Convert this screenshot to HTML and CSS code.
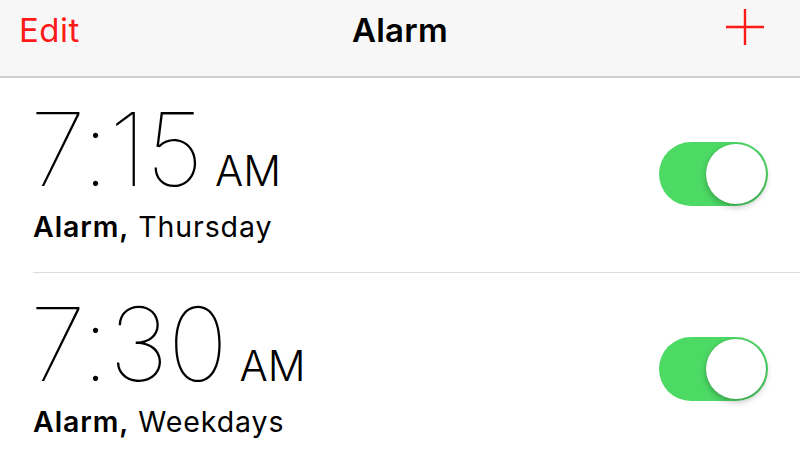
FILE: index.html
```html
<!DOCTYPE html>
<html>
<head>
<meta charset="utf-8">
<link rel="stylesheet" href="styles.css">
</head>
<body>
<div class="app">
  <header class="nav">
    <span class="nav-edit">Edit</span>
    <span class="nav-title">Alarm</span>
    <svg class="nav-add" width="46" height="40" viewBox="0 0 46 40"><path d="M23 2V38M4 20H42" stroke="#ff1a1a" stroke-width="2.4" fill="none"/></svg>
  </header>
  <div class="list">
    <div class="row">
      <div class="info">
        <div class="time"><span class="digits">7:15</span><span class="ampm">AM</span></div>
        <div class="label"><b>Alarm,</b> Thursday</div>
      </div>
      <div class="toggle"><div class="knob"></div></div>
    </div>
    <div class="row">
      <div class="info">
        <div class="time"><span class="digits">7:30</span><span class="ampm">AM</span></div>
        <div class="label"><b>Alarm,</b> Weekdays</div>
      </div>
      <div class="toggle"><div class="knob"></div></div>
    </div>
  </div>
</div>
</body>
</html>
```
FILE: styles.css
```css
html, body { margin: 0; padding: 0; background: #fff; }
.app { width: 800px; height: 450px; overflow: hidden; font-family: Inter, Roboto, "Liberation Sans", sans-serif; }
.nav {
  height: 76px; background: #f7f7f7; border-bottom: 2px solid #cfcfd2;
  display: flex; align-items: flex-start; justify-content: space-between;
  padding: 0 32px 0 19px; position: relative; box-sizing: content-box;
}
.nav-edit { color: #ff1a1a; font-size: 33px; line-height: 1; margin-top: 14px; font-weight: 400; letter-spacing: 0.5px; }
.nav-title { position: absolute; left: 0; right: 0; top: 14px; text-align: center; font-size: 33px; line-height: 1; font-weight: 600; color: #000; letter-spacing: 0.3px; }
.nav-add { margin-top: 7px; }
.list { padding-left: 33px; }
.row {
  height: 194px; display: flex; align-items: center; justify-content: space-between;
  border-bottom: 1px solid #dcdcdc; padding-right: 32px;
}
.info { display: flex; flex-direction: column; margin-top: -11px; }
.time { display: flex; align-items: baseline; line-height: 1; }
.digits { font-size: 102px; font-weight: 100; color: #000; letter-spacing: -0.5px; margin-left: -3px; }
.ampm { font-size: 42px; font-weight: 300; margin-left: 12px; }
.label { font-size: 28.5px; margin-top: 13px; color: #000; line-height: 1; letter-spacing: 0.9px; }
.label b { font-weight: 600; }
.toggle {
  width: 109px; height: 64px; border-radius: 32px; background: #4cd964;
  position: relative; margin-bottom: 2px;
}
.knob {
  position: absolute; right: 2px; top: 2px; width: 60px; height: 60px; border-radius: 50%;
  background: #fff; box-shadow: 0 3px 6px rgba(0,0,0,0.25), 0 0 1px rgba(0,0,0,0.2);
}
```
